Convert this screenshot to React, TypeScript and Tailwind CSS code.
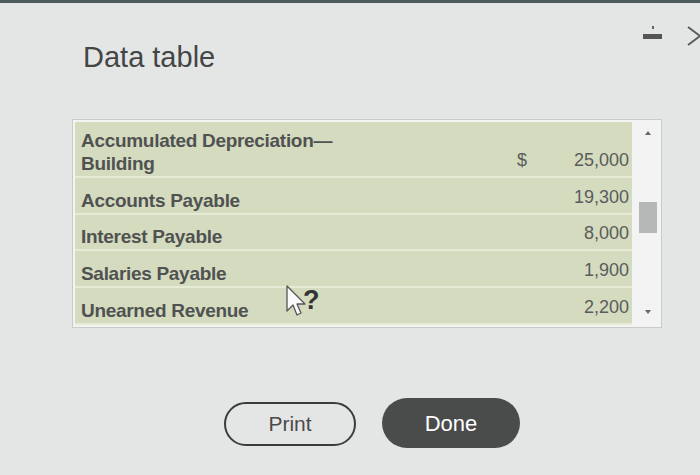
import React from "react";

const rows = [
  { label: ["Accumulated Depreciation—", "Building"], dollar: true, value: "25,000" },
  { label: ["Accounts Payable"], value: "19,300" },
  { label: ["Interest Payable"], value: "8,000" },
  { label: ["Salaries Payable"], value: "1,900" },
  { label: ["Unearned Revenue"], value: "2,200" },
];

export default function App() {
  return (
    <div
      className="relative w-[700px] h-[475px] overflow-hidden bg-[#e4e6e6] text-[#4a4c4c]"
      style={{ fontFamily: "'Liberation Sans', Arial, sans-serif" }}
    >
      <div className="h-[3px] bg-[#4d5a5c]" />
      <div className="flex items-start justify-between pl-[83px] pr-0">
        <h1 className="mt-[36px] text-[29px] leading-[36px] text-[#444646]">Data table</h1>
        <div className="flex items-start gap-[24px] mt-[22px] -mr-[10px]">
          <div className="flex flex-col items-center mt-[1px]">
            <div className="w-[2px] h-[3px] bg-[#666]" />
            <div className="mt-[5px] w-[19px] h-[5px] bg-[#555]" />
          </div>
          <svg width="24" height="22" viewBox="0 0 24 22">
            <path d="M2 2 L14 11 L2 20" fill="none" stroke="#5a5c5c" strokeWidth="2" />
          </svg>
        </div>
      </div>

      <div className="ml-[72px] mt-[44px] w-[590px] h-[209px] border border-[#c8cbc8] bg-[#f2f3f2] flex p-[2px]">
        <div className="flex-1 bg-[#d4dbbf] flex flex-col pt-[2px]">
          {rows.map((r, i) => (
            <div
              key={i}
              className={`flex items-end pr-[3px] border-b-2 border-[#e6ebd6] pb-[1px] ${
                i === 0 ? "h-[55px]" : "h-[37.5px]"
              }`}
            >
              <div className="pl-[6px] text-[19px] leading-[23px] font-bold text-[#505252] tracking-[-0.3px]">
                {r.label.map((l, j) => (
                  <div key={j}>{l}</div>
                ))}
              </div>
              <div className="flex-1" />
              {r.dollar && (
                <span className="mb-[3px] text-[18px] leading-[23px] text-[#5a5c5c] mr-[32px]">$</span>
              )}
              <span className="mb-[3px] w-[70px] text-right text-[18px] leading-[23px] text-[#5a5c5c]">
                {r.value}
              </span>
            </div>
          ))}
        </div>
        <div className="w-[27px] relative">
          <div className="absolute left-[13px] top-[9px] w-0 h-0 border-l-[3px] border-r-[3px] border-b-[4px] border-l-transparent border-r-transparent border-b-[#666]" />
          <div className="absolute left-[7px] top-[80px] w-[18px] h-[31px] bg-[#b6b8b8]" />
          <div className="absolute left-[13px] top-[188px] w-0 h-0 border-l-[3px] border-r-[3px] border-t-[4px] border-l-transparent border-r-transparent border-t-[#666]" />
        </div>
      </div>

      {/* cursor */}
      <div className="absolute left-[286px] top-[285px] flex items-start">
        <svg width="20" height="32" viewBox="0 0 20 32">
          <path d="M1 1 L1 26 L7 20 L11 30 L15 28 L11 19 L19 19 Z" fill="#fafafa" stroke="#555" strokeWidth="1.3" strokeLinejoin="round" />
        </svg>
        <span className="-ml-[3px] mt-[2px] text-[27px] font-bold leading-none text-[#333]">?</span>
      </div>

      <div className="flex justify-center gap-[26px] mt-[70px] pl-[44px]">
        <button className="w-[132px] h-[44px] rounded-full border-2 border-[#3a3c3c] text-[21px] text-[#4a4a4a] mt-[4px]">
          Print
        </button>
        <button className="w-[138px] h-[50px] rounded-full bg-[#4a4b4b] text-[22px] text-white">Done</button>
      </div>
    </div>
  );
}
